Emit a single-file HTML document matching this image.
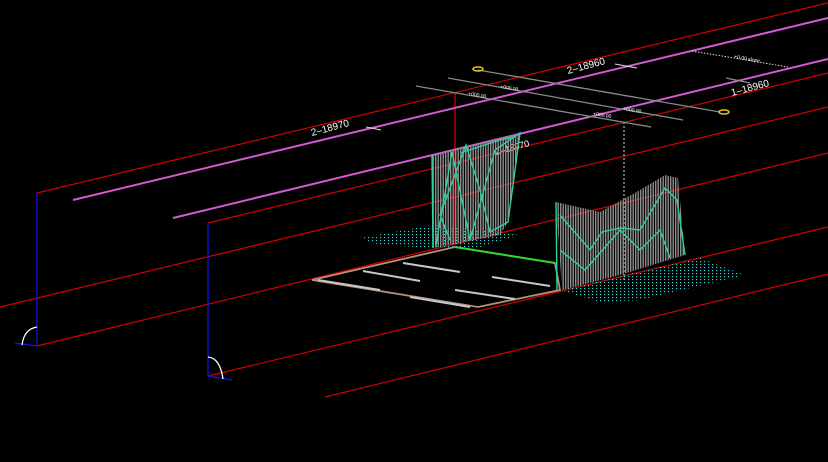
<!DOCTYPE html>
<html><head><meta charset="utf-8"><style>
html,body{margin:0;padding:0;background:#000;width:828px;height:462px;overflow:hidden}
svg{display:block}
text{font-family:"Liberation Sans",sans-serif;fill:#fff}
</style></head><body>
<svg width="828" height="462" viewBox="0 0 828 462" xmlns="http://www.w3.org/2000/svg">
<defs>
<pattern id="hatch" width="2.5" height="6" patternUnits="userSpaceOnUse">
<rect x="0" y="0" width="1.4" height="6" fill="#8c8c8c"/>
</pattern>
<pattern id="dots" width="4" height="3" patternUnits="userSpaceOnUse">
<rect x="0" y="0" width="1.2" height="1.2" fill="#2fd6d0"/>
</pattern>
</defs>
<rect width="828" height="462" fill="#000"/>
<g stroke="#d40000" stroke-width="1.2" fill="none">
<line x1="37" y1="193" x2="840" y2="0"/>
<line x1="208" y1="223" x2="828" y2="73"/>
<line x1="0" y1="307" x2="828" y2="107"/>
<line x1="37" y1="346" x2="828" y2="153"/>
<line x1="208" y1="376" x2="828" y2="227"/>
<line x1="325" y1="397" x2="828" y2="274"/>
<line x1="455" y1="92" x2="455" y2="245"/>
</g>
<line x1="624" y1="122" x2="624" y2="280" stroke="#ddd" stroke-width="1" stroke-dasharray="2 2"/>
<g stroke="#d25ad2" stroke-width="2" fill="none">
<line x1="73" y1="200" x2="828" y2="18"/>
<line x1="173" y1="218" x2="828" y2="59"/>
</g>
<g stroke="#1010c8" stroke-width="1.5" fill="none">
<line x1="37" y1="193" x2="37" y2="346"/>
<line x1="15" y1="343" x2="37" y2="346"/>
<line x1="208" y1="223" x2="208" y2="376"/>
<line x1="208" y1="376" x2="232" y2="380"/>
</g>
<g stroke="#fff" stroke-width="1.3" fill="none">
<path d="M22 345 Q24 329 37 327"/>
<path d="M208 357 Q220 358 223 379"/>
</g>
<g stroke="#8a8a8a" stroke-width="1.3">
<line x1="478" y1="70" x2="720" y2="112"/>
<line x1="448" y1="78" x2="683" y2="120"/>
<line x1="416" y1="86" x2="651" y2="127"/>
<line x1="726" y1="78" x2="750" y2="83"/>
</g>
<g stroke="#e6c020" stroke-width="1.5" fill="none">
<ellipse cx="478" cy="69" rx="5" ry="2"/>
<ellipse cx="724" cy="112" rx="5" ry="2"/>
</g>
<line x1="692" y1="51" x2="788" y2="67" stroke="#ddd" stroke-dasharray="1.5 1.5"/>
<g font-size="10">
<text transform="translate(312,136) rotate(-15)">2–18970</text>
<text transform="translate(568,74) rotate(-15)">2–18960</text>
<text transform="translate(732,96) rotate(-15)">1–18960</text>
<text transform="translate(496,155) rotate(-15)" font-size="9">2–18970</text>
</g>
<g font-size="5">
<text transform="translate(734,58) rotate(10)">+0.00 slope</text>
<text transform="translate(468,95) rotate(10)">+000.00</text>
<text transform="translate(500,88) rotate(10)">+000.00</text>
<text transform="translate(593,115) rotate(10)">+000.00</text>
<text transform="translate(623,110) rotate(10)">+000.00</text>
</g>
<g stroke="#ddd" stroke-width="1">
<line x1="366" y1="127" x2="381" y2="130"/>
<line x1="615" y1="64" x2="637" y2="68"/>
</g>
<polygon points="360,238 432,225 520,235 470,250 380,245" fill="url(#dots)"/>
<polygon points="560,290 700,258 745,275 640,300 600,302" fill="url(#dots)"/>
<polygon points="312,280 455,247 555,263 560,290 478,307" fill="#000" stroke="#b0907a" stroke-width="1.8"/>
<line x1="455" y1="247" x2="555" y2="263" stroke="#30d830" stroke-width="2"/>
<g stroke="#c8c8c8" stroke-width="2">
<line x1="318" y1="280" x2="380" y2="290"/>
<line x1="363" y1="271" x2="420" y2="281"/>
<line x1="403" y1="263" x2="460" y2="272"/>
<line x1="410" y1="297" x2="470" y2="307"/>
<line x1="455" y1="290" x2="515" y2="299"/>
<line x1="492" y1="277" x2="550" y2="286"/>
</g>
<polygon points="432,155 520,133 508,222 500,235 433,248" fill="url(#hatch)"/>
<g stroke="#2fd0a0" stroke-width="1.4" fill="none">
<polyline points="432,155 433,248"/>
<polyline points="436,245 452,152 470,240 495,150 520,133 508,222 490,232 480,190 466,145 440,215 450,240"/>
<polyline points="460,153 500,140 515,137"/>
</g>
<polygon points="556,202 600,212 640,190 665,175 678,178 685,255 620,275 562,290" fill="url(#hatch)"/>
<g stroke="#2fd0a0" stroke-width="1.4" fill="none">
<polyline points="556,202 557,290"/>
<polyline points="560,215 590,250 602,232 620,228 640,230 665,188 677,200 685,255"/>
<polyline points="560,250 585,270 620,230 640,250 660,230 670,258"/>
</g>
</svg>
</body></html>
